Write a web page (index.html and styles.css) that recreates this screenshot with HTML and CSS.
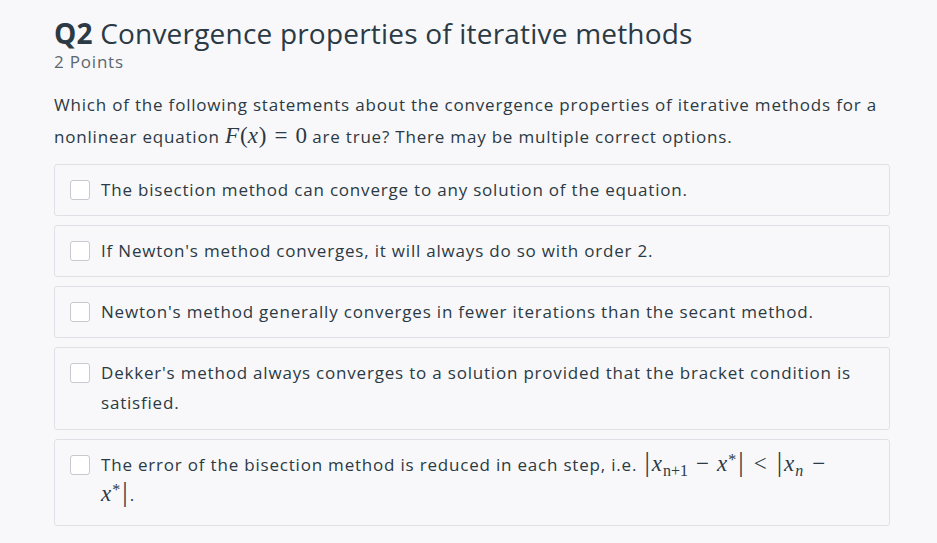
FILE: index.html
```html
<!DOCTYPE html>
<html>
<head>
<meta charset="utf-8">
<link rel="stylesheet" href="styles.css">
</head>
<body>
<div class="page">
  <h1 class="title"><span class="qnum">Q2</span> Convergence properties of iterative methods</h1>
  <div class="points">2 Points</div>
  <p class="question">Which of the following statements about the convergence properties of iterative methods for a nonlinear equation <span class="math"><i>F</i>(<i>x</i>)<span class="rel">=</span>0</span> are true? There may be multiple correct options.</p>
  <div class="options">
    <label class="option"><span class="box"></span><span class="otext">The bisection method can converge to any solution of the equation.</span></label>
    <label class="option"><span class="box"></span><span class="otext">If Newton's method converges, it will always do so with order 2.</span></label>
    <label class="option"><span class="box"></span><span class="otext">Newton's method generally converges in fewer iterations than the secant method.</span></label>
    <label class="option two"><span class="box"></span><span class="otext">Dekker's method always converges to a solution provided that the bracket condition is satisfied.</span></label>
    <label class="option tall"><span class="box"></span><span class="otext">The error of the bisection method is reduced in each step, i.e. <span class="math"><span class="bar">|</span><i>x</i><sub>n+1</sub><span class="bin">−</span><i>x</i><sup>*</sup><span class="bar">|</span><span class="rel">&lt;</span><span class="bar">|</span><i>x</i><sub><i>n</i></sub><span class="bin">−</span></span><br><span class="math"><i>x</i><sup>*</sup><span class="bar">|</span></span>.</span></label>
  </div>
</div>
</body>
</html>
```
FILE: styles.css
```css
html, body {
  margin: 0;
  padding: 0;
  background: #f8f8fa;
}
.page {
  padding: 14px 47px 0 54px;
  font-family: "Open Sans", Lato, sans-serif;
  color: #2b3a44;
}
.title {
  margin: 0;
  font-size: 28px;
  font-weight: 400;
  line-height: 38px;
  letter-spacing: 0.2px;
}
.qnum {
  font-weight: 700;
}
.points {
  font-size: 17px;
  color: #5b6770;
  line-height: 20px;
  letter-spacing: 0.8px;
}
.question {
  font-size: 17px;
  letter-spacing: 0.8px;
  line-height: 32px;
  margin: 17px 0 11px;
}
.math {
  font-family: "Liberation Serif", "DejaVu Serif", serif;
  font-size: 23px;
  line-height: 20px;
  letter-spacing: 0;
  white-space: nowrap;
}
.math i {
  font-style: italic;
  margin-right: 1px;
}
.math .rel {
  margin: 0 8px;
}
.math .bin {
  margin: 0 8px;
}
.math sub, .math sup {
  font-size: 16px;
  line-height: 0;
}
.math sub {
  vertical-align: -5px;
}
.math sup {
  vertical-align: 6px;
}
.math .bar {
  font-style: normal;
  font-size: 27px;
  margin: 0 2px;
}
.options {
  display: flex;
  flex-direction: column;
  gap: 9px;
}
.option {
  display: flex;
  align-items: flex-start;
  gap: 11px;
  border: 1px solid #e0e0e8;
  border-radius: 3px;
  padding: 10px 15px;
  font-size: 17px;
  letter-spacing: 0.8px;
  line-height: 30px;
}
.option.two {
  padding-bottom: 11px;
}
.option.tall {
  padding-bottom: 15px;
}
.box {
  flex: none;
  width: 18px;
  height: 18px;
  margin-top: 5px;
  border: 1px solid #c8c8d0;
  border-radius: 3px;
  background: #fff;
}
.otext {
  flex: 1;
}
```
